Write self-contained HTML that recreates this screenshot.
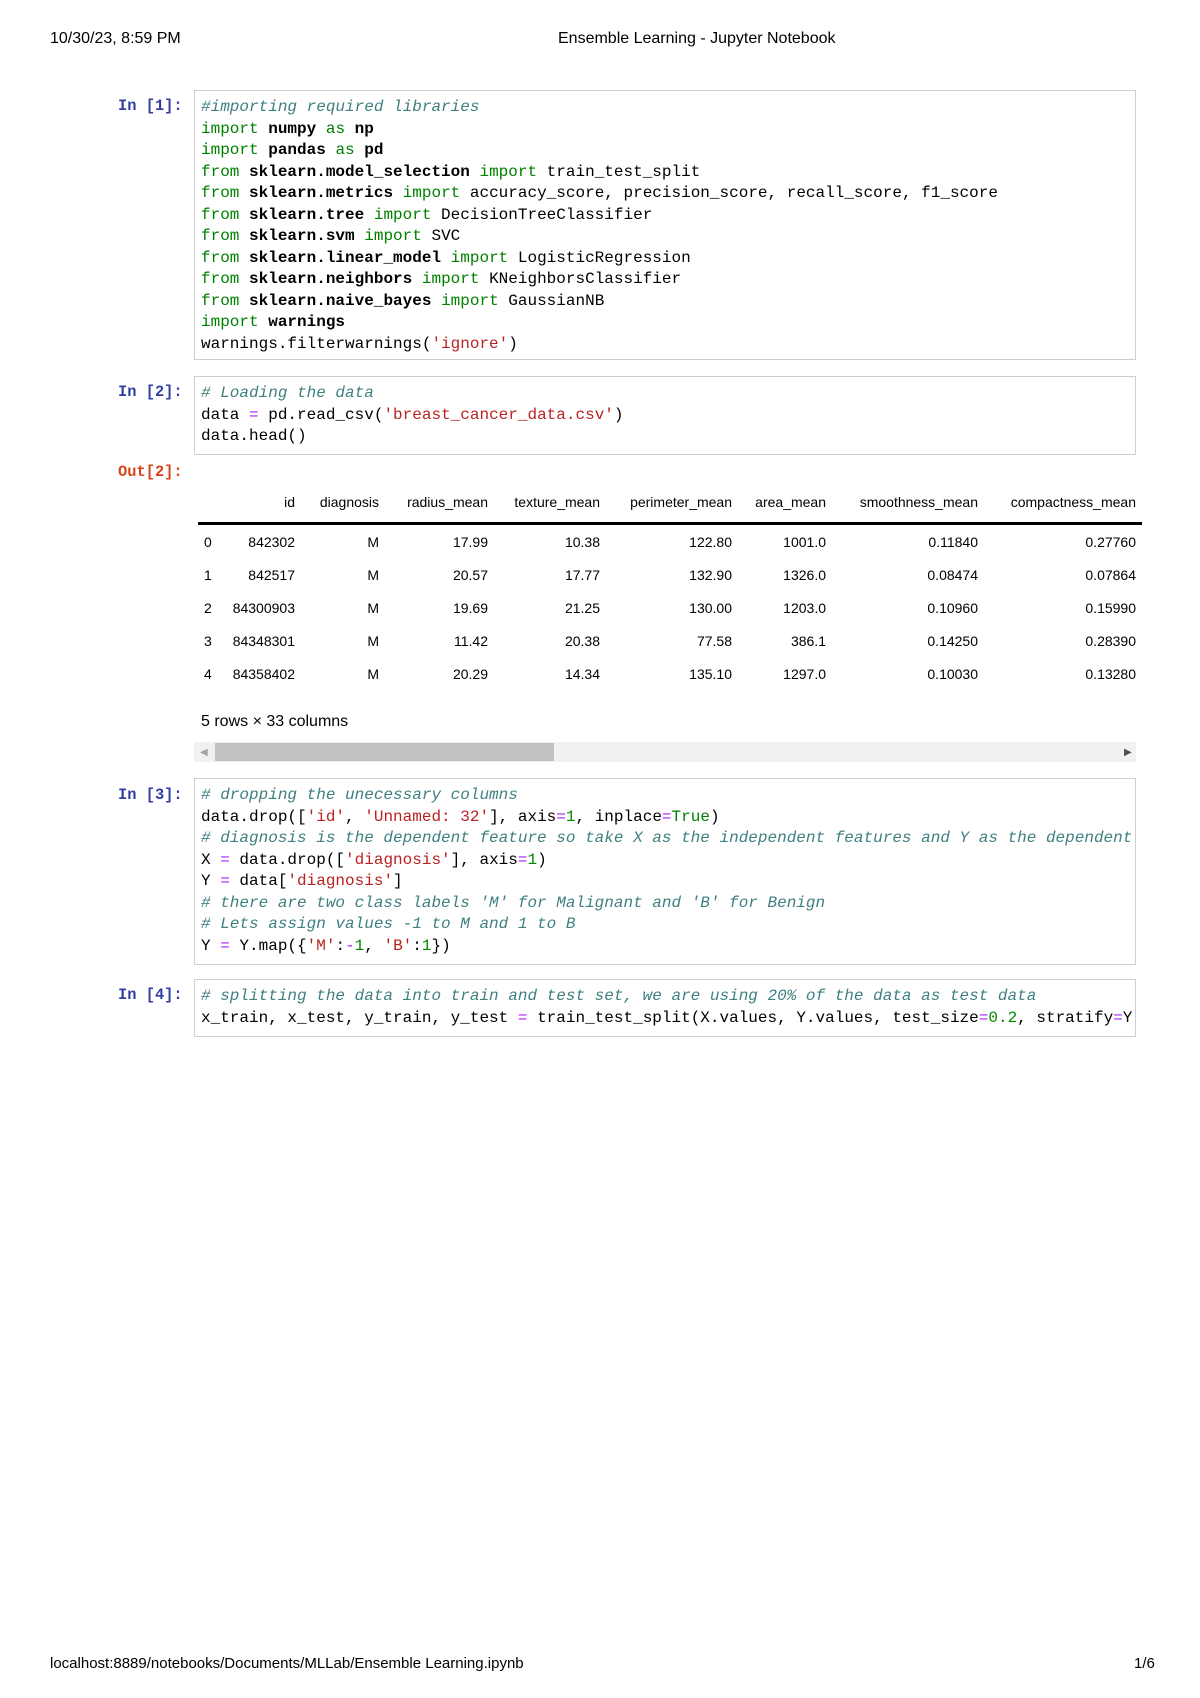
<!DOCTYPE html>
<html><head><meta charset="utf-8"><style>
body{margin:0;width:1200px;height:1698px;background:#fff;position:relative;font-family:"Liberation Sans",sans-serif;color:#000;overflow:hidden}
.abs{position:absolute}
.hdr{font-size:16px;top:30px}
.cell{position:absolute;left:194px;width:928px;border:1px solid #cfcfcf;background:#fff;overflow:hidden}
.code{font-family:"Liberation Mono",monospace;font-size:16px;line-height:21.5px;padding:6px 6px;white-space:pre;}
.pr{position:absolute;font-family:"Liberation Mono",monospace;font-size:15.4px;color:#303f9f;font-weight:bold;left:118px}
.o{color:#d84315}
.k{color:#008000;}
.c{color:#408080;font-style:italic}
.s{color:#ba2121}
.n{color:#080;}
.p{color:#aa22ff}
b{font-weight:bold}
table{position:absolute;left:198px;top:482px;border-collapse:collapse;font-size:14px;table-layout:fixed;width:944px}
td,th{text-align:right;padding:0 6px;font-weight:normal;height:33px;white-space:nowrap}
th{height:40px;border-bottom:3px solid #000}
</style></head><body>
<div class="abs hdr" style="left:50px">10/30/23, 8:59 PM</div>
<div class="abs hdr" style="left:558px">Ensemble Learning - Jupyter Notebook</div>

<div class="pr" style="top:97px">In [1]:</div>
<div class="cell code" style="top:90px;height:256px"><span class="c">#importing required libraries</span>
<span class="k">import</span> <b>numpy</b> <span class="k">as</span> <b>np</b>
<span class="k">import</span> <b>pandas</b> <span class="k">as</span> <b>pd</b>
<span class="k">from</span> <b>sklearn.model_selection</b> <span class="k">import</span> train_test_split
<span class="k">from</span> <b>sklearn.metrics</b> <span class="k">import</span> accuracy_score, precision_score, recall_score, f1_score
<span class="k">from</span> <b>sklearn.tree</b> <span class="k">import</span> DecisionTreeClassifier
<span class="k">from</span> <b>sklearn.svm</b> <span class="k">import</span> SVC
<span class="k">from</span> <b>sklearn.linear_model</b> <span class="k">import</span> LogisticRegression
<span class="k">from</span> <b>sklearn.neighbors</b> <span class="k">import</span> KNeighborsClassifier
<span class="k">from</span> <b>sklearn.naive_bayes</b> <span class="k">import</span> GaussianNB
<span class="k">import</span> <b>warnings</b>
warnings.filterwarnings(<span class="s">'ignore'</span>)</div>

<div class="pr" style="top:383px">In [2]:</div>
<div class="cell code" style="top:376px;height:65px"><span class="c"># Loading the data</span>
data <span class="p">=</span> pd.read_csv(<span class="s">'breast_cancer_data.csv'</span>)
data.head()</div>

<div class="pr o" style="top:463px">Out[2]:</div>
<table>
<colgroup><col style="width:22px"><col style="width:81px"><col style="width:84px"><col style="width:109px"><col style="width:112px"><col style="width:132px"><col style="width:94px"><col style="width:152px"><col style="width:158px"></colgroup>
<tr><th></th><th>id</th><th>diagnosis</th><th>radius_mean</th><th>texture_mean</th><th>perimeter_mean</th><th>area_mean</th><th>smoothness_mean</th><th>compactness_mean</th></tr>
<tr><td style="text-align:left">0</td><td>842302</td><td>M</td><td>17.99</td><td>10.38</td><td>122.80</td><td>1001.0</td><td>0.11840</td><td>0.27760</td></tr>
<tr><td style="text-align:left">1</td><td>842517</td><td>M</td><td>20.57</td><td>17.77</td><td>132.90</td><td>1326.0</td><td>0.08474</td><td>0.07864</td></tr>
<tr><td style="text-align:left">2</td><td>84300903</td><td>M</td><td>19.69</td><td>21.25</td><td>130.00</td><td>1203.0</td><td>0.10960</td><td>0.15990</td></tr>
<tr><td style="text-align:left">3</td><td>84348301</td><td>M</td><td>11.42</td><td>20.38</td><td>77.58</td><td>386.1</td><td>0.14250</td><td>0.28390</td></tr>
<tr><td style="text-align:left">4</td><td>84358402</td><td>M</td><td>20.29</td><td>14.34</td><td>135.10</td><td>1297.0</td><td>0.10030</td><td>0.13280</td></tr>
</table>
<div class="abs" style="left:201px;top:713px;font-size:16px">5 rows × 33 columns</div>
<div class="abs" style="left:194px;top:742px;width:942px;height:20px;background:#f1f1f1"></div>
<div class="abs" style="left:215px;top:743px;width:339px;height:18px;background:#c1c1c1"></div>
<div class="abs" style="left:200px;top:747px;font-size:10px;color:#a3a3a3">◀</div>
<div class="abs" style="left:1124px;top:747px;font-size:10px;color:#505050">▶</div>

<div class="pr" style="top:786px">In [3]:</div>
<div class="cell code" style="top:778px;height:173px"><span class="c"># dropping the unecessary columns</span>
data.drop([<span class="s">'id'</span>, <span class="s">'Unnamed: 32'</span>], axis<span class="p">=</span><span class="n">1</span>, inplace<span class="p">=</span><span class="k">True</span>)
<span class="c"># diagnosis is the dependent feature so take X as the independent features and Y as the dependent</span>
X <span class="p">=</span> data.drop([<span class="s">'diagnosis'</span>], axis<span class="p">=</span><span class="n">1</span>)
Y <span class="p">=</span> data[<span class="s">'diagnosis'</span>]
<span class="c"># there are two class labels 'M' for Malignant and 'B' for Benign</span>
<span class="c"># Lets assign values -1 to M and 1 to B</span>
Y <span class="p">=</span> Y.map({<span class="s">'M'</span>:<span class="p">-</span><span class="n">1</span>, <span class="s">'B'</span>:<span class="n">1</span>})</div>

<div class="pr" style="top:986px">In [4]:</div>
<div class="cell code" style="top:979px;height:44px"><span class="c"># splitting the data into train and test set, we are using 20% of the data as test data</span>
x_train, x_test, y_train, y_test <span class="p">=</span> train_test_split(X.values, Y.values, test_size<span class="p">=</span><span class="n">0.2</span>, stratify<span class="p">=</span>Y</div>

<div class="abs" style="left:50px;top:1655px;font-size:15px">localhost:8889/notebooks/Documents/MLLab/Ensemble Learning.ipynb</div>
<div class="abs" style="left:1134px;top:1655px;font-size:15px">1/6</div>
</body></html>
